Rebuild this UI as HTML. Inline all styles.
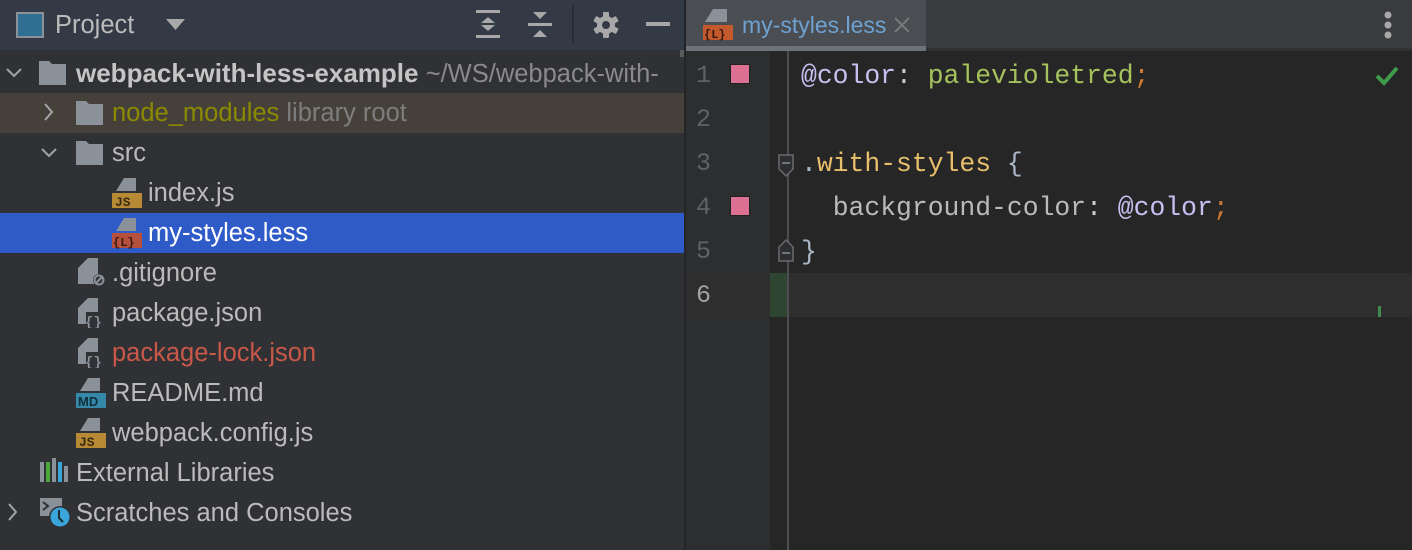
<!DOCTYPE html>
<html><head><meta charset="utf-8"><style>
*{margin:0;padding:0;box-sizing:border-box}
body{width:1412px;height:550px;overflow:hidden;background:#262626;font-family:"Liberation Sans",sans-serif;position:relative}
.a{position:absolute}
.t{position:absolute;font-size:25.5px;line-height:42px;color:#bbbbbb;white-space:nowrap}
.row{position:absolute;left:0;width:684px;height:40px}
.code{position:absolute;font-family:"Liberation Mono",monospace;font-size:26.4px;line-height:44px;white-space:pre;color:#a9b7c6}
.ln{position:absolute;left:696px;font-family:"Liberation Mono",monospace;font-size:25px;line-height:44px;color:#606366}
</style></head><body>
<div class="a" style="left:0;top:0;width:684px;height:550px;background:#2f3134"></div>
<div class="a" style="left:0;top:0;width:684px;height:50px;background:#333a45"></div>
<div class="a" style="left:684px;top:0;width:2px;height:550px;background:#232425"></div>
<div class="a" style="left:16px;top:12px;width:28px;height:26px;border:2px solid #8b9197;background:#2f6f92"></div>
<div class="t" style="left:55px;top:4px;color:#bbbbbb;font-size:25.5px">Project</div>
<svg class="a" style="left:166px;top:19px" width="20" height="12"><path d="M0 0H19L9.5 11Z" fill="#a8a8a8"/></svg>
<svg class="a" style="left:474px;top:8px" width="28" height="32" fill="#a8a8a8"><rect x="2" y="2" width="24" height="3"/><rect x="2" y="27" width="24" height="3"/><path d="M14 9L21 15H7Z M14 23L21 17H7Z"/></svg>
<svg class="a" style="left:526px;top:8px" width="28" height="32" fill="#a8a8a8"><rect x="2" y="15" width="24" height="3"/><path d="M7 4H21L14 11Z M7 29H21L14 22Z"/></svg>
<div class="a" style="left:572px;top:5px;width:2px;height:38px;background:#2a2e34"></div>
<svg class="a" style="left:592px;top:11px" width="28" height="28"><g fill="#a8a8a8"><circle cx="14" cy="14" r="9"/><rect x="11" y="1" width="6" height="26" rx="1"/><rect x="11" y="1" width="6" height="26" rx="1" transform="rotate(60 14 14)"/><rect x="11" y="1" width="6" height="26" rx="1" transform="rotate(120 14 14)"/></g><circle cx="14" cy="14" r="4" fill="#333a45"/></svg>
<div class="a" style="left:646px;top:22px;width:24px;height:4px;background:#a8a8a8"></div>
<div class="a" style="left:680px;top:50px;width:4px;height:7px;background:#5a5d60"></div>
<div class="row" style="top:93px;background:#45403a"></div>
<div class="row" style="top:213px;background:#2f5bc8"></div>
<svg class="a" style="left:5px;top:66px" width="18" height="14"><path d="M2 3L9 10L16 3" stroke="#a0a4a8" stroke-width="2" fill="none"/></svg>
<svg class="a" style="left:38px;top:60px" width="30" height="26"><path d="M1 1H11L14 4H28V25H1Z" fill="#8a9199"/></svg>
<div class="t" style="left:76px;top:52px;font-weight:bold;color:#c5c5c5;font-size:26px">webpack-with-less-example <span style="font-weight:normal;color:#8a8a8a;font-size:25.5px">~/WS/webpack-with-</span></div>
<svg class="a" style="left:42px;top:102px" width="14" height="20"><path d="M3 2L10 10L3 18" stroke="#a0a4a8" stroke-width="2" fill="none"/></svg>
<svg class="a" style="left:75px;top:100px" width="30" height="26"><path d="M1 1H11L14 4H28V25H1Z" fill="#8a9199"/></svg>
<div class="t" style="left:112px;top:92px;color:#8c8a00">node_modules <span style="color:#7d7d7d">library root</span></div>
<svg class="a" style="left:40px;top:146px" width="18" height="14"><path d="M2 3L9 10L16 3" stroke="#a0a4a8" stroke-width="2" fill="none"/></svg>
<svg class="a" style="left:75px;top:140px" width="30" height="26"><path d="M1 1H11L14 4H28V25H1Z" fill="#8a9199"/></svg>
<div class="t" style="left:112px;top:132px">src</div>
<svg class="a" style="left:112px;top:178px" width="30" height="31"><path d="M12 0H24V13H4Z" fill="#8a9199"/><rect x="0" y="15" width="30" height="15" fill="#b88a35"/><text x="3" y="28" font-family="Liberation Mono,monospace" font-size="13" font-weight="bold" fill="#3a2a10">JS</text></svg>
<div class="t" style="left:148px;top:172px">index.js</div>
<svg class="a" style="left:112px;top:218px" width="30" height="31"><path d="M12 0H24V13H4Z" fill="#8a9199"/><rect x="0" y="15" width="30" height="15" fill="#b5503c"/><text x="1" y="28" font-family="Liberation Mono,monospace" font-size="12" font-weight="bold" fill="#3a1a10">{L}</text></svg>
<div class="t" style="left:148px;top:212px;color:#ffffff">my-styles.less</div>
<svg class="a" style="left:78px;top:258px" width="28" height="30"><path d="M10 0H20V26H0V10Z" fill="#8a9199"/><circle cx="21" cy="22" r="6" fill="#2f3134"/><circle cx="21" cy="22" r="4.5" stroke="#8a9199" stroke-width="2" fill="none"/><path d="M18 25L24 19" stroke="#8a9199" stroke-width="2"/></svg>
<div class="t" style="left:112px;top:252px">.gitignore</div>
<svg class="a" style="left:78px;top:298px" width="30" height="30"><path d="M10 0H20V26H0V10Z" fill="#8a9199"/><rect x="8" y="14" width="20" height="15" fill="#2f3134"/><text x="7" y="28" font-family="Liberation Mono,monospace" font-size="14" font-weight="bold" fill="#8a9199">{}</text></svg>
<div class="t" style="left:112px;top:292px">package.json</div>
<svg class="a" style="left:78px;top:338px" width="30" height="30"><path d="M10 0H20V26H0V10Z" fill="#8a9199"/><rect x="8" y="14" width="20" height="15" fill="#2f3134"/><text x="7" y="28" font-family="Liberation Mono,monospace" font-size="14" font-weight="bold" fill="#8a9199">{}</text></svg>
<div class="t" style="left:112px;top:332px;color:#c9584a">package-lock.json</div>
<svg class="a" style="left:76px;top:378px" width="30" height="31"><path d="M12 0H24V13H4Z" fill="#8a9199"/><rect x="0" y="15" width="30" height="15" fill="#3588a8"/><text x="2" y="28" font-family="Liberation Sans,sans-serif" font-size="13" font-weight="bold" fill="#10303c">MD</text></svg>
<div class="t" style="left:112px;top:372px">README.md</div>
<svg class="a" style="left:76px;top:418px" width="30" height="31"><path d="M12 0H24V13H4Z" fill="#8a9199"/><rect x="0" y="15" width="30" height="15" fill="#b88a35"/><text x="3" y="28" font-family="Liberation Mono,monospace" font-size="13" font-weight="bold" fill="#3a2a10">JS</text></svg>
<div class="t" style="left:112px;top:412px">webpack.config.js</div>
<svg class="a" style="left:40px;top:458px" width="30" height="26"><rect x="0" y="4" width="4" height="20" fill="#8a9199"/><rect x="6" y="4" width="4" height="20" fill="#4aa83a"/><rect x="12" y="0" width="4" height="24" fill="#8a9199"/><rect x="18" y="4" width="4" height="20" fill="#3aa5d8"/><rect x="24" y="8" width="4" height="16" fill="#8a9199"/></svg>
<div class="t" style="left:76px;top:452px">External Libraries</div>
<svg class="a" style="left:6px;top:502px" width="14" height="20"><path d="M3 2L10 10L3 18" stroke="#a0a4a8" stroke-width="2" fill="none"/></svg>
<svg class="a" style="left:40px;top:498px" width="32" height="32"><rect x="0" y="0" width="22" height="18" fill="#8a9199"/><path d="M3 4L8 8L3 12" stroke="#2f3134" stroke-width="2" fill="none"/><circle cx="20" cy="19" r="11" fill="#2f3134"/><circle cx="20" cy="19" r="9.5" fill="#3aa5d8"/><path d="M19 12V20L23 24" stroke="#1b2a33" stroke-width="2" fill="none"/></svg>
<div class="t" style="left:76px;top:492px">Scratches and Consoles</div>
<div class="a" style="left:686px;top:0;width:726px;height:50px;background:#393b3e"></div>
<div class="a" style="left:686px;top:0;width:240px;height:51px;background:#4a4e53"></div>
<div class="a" style="left:686px;top:46px;width:240px;height:5px;background:#6e737a"></div>
<div class="a" style="left:926px;top:48px;width:486px;height:3px;background:#2f3134"></div>
<svg class="a" style="left:699px;top:9px" width="36" height="32"><path d="M14 0H28V13H6Z" fill="#8a9199"/><rect x="4" y="16" width="30" height="15" fill="#c25a2e"/><text x="5" y="29" font-family="Liberation Mono,monospace" font-size="12" font-weight="bold" fill="#3a1a10">{L}</text></svg>
<div class="t" style="left:742px;top:4px;font-size:23px;color:#6fa1d1">my-styles.less</div>
<svg class="a" style="left:893px;top:16px" width="18" height="18"><path d="M2 2L16 16M16 2L2 16" stroke="#787878" stroke-width="2"/></svg>
<svg class="a" style="left:1382px;top:10px" width="12" height="30" fill="#a8a8a8"><circle cx="6" cy="5" r="3.5"/><circle cx="6" cy="15" r="3.5"/><circle cx="6" cy="25" r="3.5"/></svg>
<div class="a" style="left:686px;top:51px;width:84px;height:499px;background:#2d2e30"></div>
<div class="a" style="left:686px;top:273px;width:726px;height:44px;background:#2e2e2e"></div>
<div class="a" style="left:770px;top:273px;width:18px;height:44px;background:#2e4531"></div>
<div class="a" style="left:787px;top:51px;width:2px;height:499px;background:#4b4d50"></div>
<div class="a" style="left:1378px;top:306px;width:3px;height:11px;background:#3f8a4f"></div>
<div class="ln" style="top:54px">1</div><div class="ln" style="top:98px">2</div><div class="ln" style="top:142px">3</div><div class="ln" style="top:186px">4</div><div class="ln" style="top:230px">5</div><div class="ln" style="top:274px;color:#a4a3a3">6</div>
<div class="a" style="left:730px;top:64px;width:20px;height:20px;background:#db7093;border:1px solid #222"></div>
<div class="a" style="left:730px;top:196px;width:20px;height:20px;background:#db7093;border:1px solid #222"></div>
<svg class="a" style="left:777px;top:153px" width="20" height="26"><path d="M2 2H16V16L9 23L2 16Z" fill="#2d2e30" stroke="#6a6c6f" stroke-width="1.5"/><path d="M5 10H13" stroke="#8a8c8f" stroke-width="1.5"/></svg>
<svg class="a" style="left:777px;top:237px" width="20" height="26"><path d="M2 24H16V10L9 3L2 10Z" fill="#2d2e30" stroke="#6a6c6f" stroke-width="1.5"/><path d="M5 16H13" stroke="#8a8c8f" stroke-width="1.5"/></svg>
<div class="code" style="left:801px;top:54px"><span style="color:#c5c0f0">@color</span><span style="color:#cccccc">: </span><span style="color:#a5c25c">palevioletred</span><span style="color:#cc7832">;</span></div>
<div class="code" style="left:801px;top:142px"><span style="color:#a9b7c6">.</span><span style="color:#e8bf6a">with-styles</span> <span style="color:#a9b7c6">{</span></div>
<div class="code" style="left:801px;top:186px">  <span style="color:#bababa">background-color</span><span style="color:#cccccc">: </span><span style="color:#c5c0f0">@color</span><span style="color:#cc7832">;</span></div>
<div class="code" style="left:801px;top:230px">}</div>
<svg class="a" style="left:1374px;top:64px" width="26" height="24"><path d="M3 12L10 19L23 4" stroke="#3e9b4a" stroke-width="4" fill="none"/></svg>
</body></html>
